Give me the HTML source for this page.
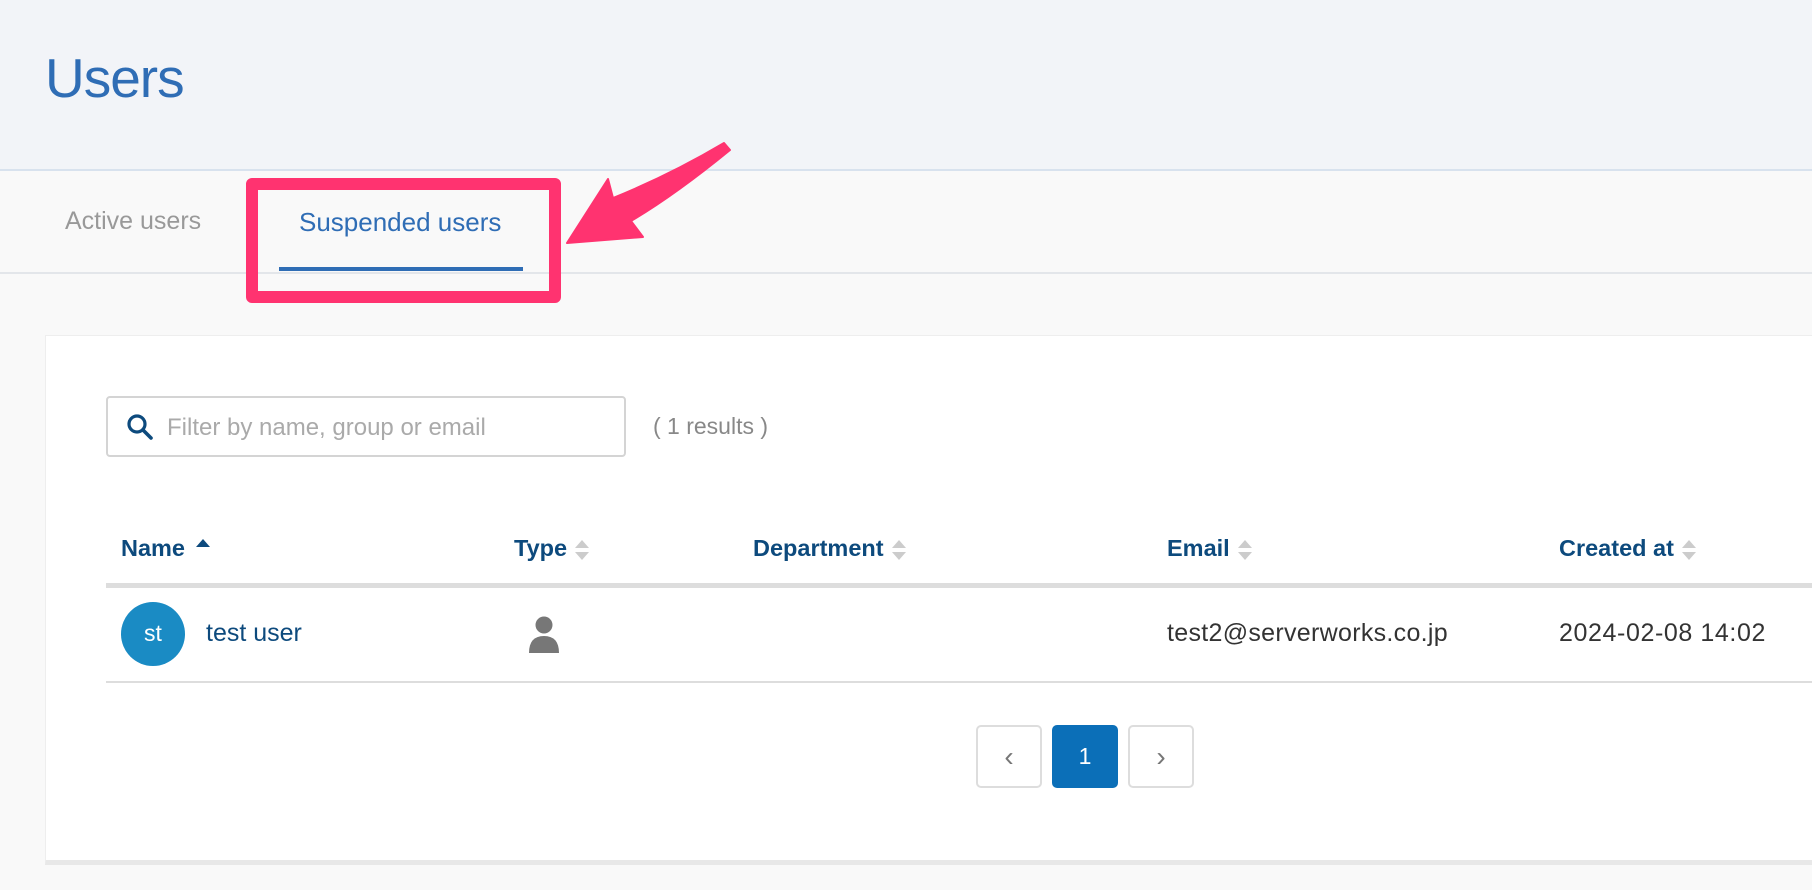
<!DOCTYPE html>
<html><head><meta charset="utf-8"><style>
*{margin:0;padding:0;box-sizing:border-box}
body{width:1812px;height:890px;overflow:hidden;background:#f9f9f9;font-family:"Liberation Sans",sans-serif;position:relative}
.hdr{position:absolute;left:0;top:0;width:1812px;height:171px;background:#f2f4f8;border-bottom:2px solid #d8e2ee}
.hdr h1{position:absolute;left:45px;top:46px;font-weight:normal;font-size:55px;color:#2f6db5;letter-spacing:-1px}
.tabs{position:absolute;left:0;top:171px;width:1812px;height:103px;background:#f9f9f9;border-bottom:2px solid #e3e6ea}
.t{position:absolute;top:36px;font-size:25px}
.ul{position:absolute;left:279px;top:96px;width:244px;height:4px;background:#2f6db5}
.box{position:absolute;left:246px;top:178px;width:315px;height:125px;border:12px solid #ff3370;border-radius:6px}
.card{position:absolute;left:45px;top:335px;width:1780px;height:530px;background:#fff;border:1px solid #eee;border-bottom:5px solid #e8e8e8}
.search{position:absolute;left:106px;top:396px;width:520px;height:61px;border:2px solid #d4d4d4;border-radius:4px;background:#fff}
.search span{position:absolute;left:59px;top:16px;font-size:24px;color:#aaa}
.th{position:absolute;top:535px;font-size:23.5px;font-weight:bold;color:#0d4a7d}
.sort{display:inline-block;vertical-align:middle;margin-left:8px;width:14px;height:22px;position:relative}
.sort:before{content:"";position:absolute;left:0;top:1px;border:7px solid transparent;border-bottom:8px solid #ccc;border-top:0}
.sort:after{content:"";position:absolute;left:0;top:13px;border:7px solid transparent;border-top:8px solid #ccc;border-bottom:0}
.td{position:absolute;top:619px;font-size:25px;color:#333}
.pg{position:absolute;top:725px;width:66px;height:63px;border:2px solid #ddd;border-radius:5px;background:#fff;text-align:center;line-height:59px;font-size:28px;color:#777}
</style></head><body>
<div class="hdr"><h1>Users</h1></div>
<div class="tabs">
<div class="t" style="left:65px;color:#999">Active users</div>
<div class="t" style="left:299px;color:#2f6db5;font-size:26px">Suspended users</div>
<div class="ul"></div>
</div>
<div class="box"></div>
<svg style="position:absolute;left:0;top:0" width="800" height="320"><path d="M567,243 L608,179 L613,198 Q670,175 724,143 L730,150 Q675,195 631,221 L643,237 Z" fill="#ff3370" stroke="#ff3370" stroke-width="2" stroke-linejoin="round"/></svg>
<div class="card"></div>
<div class="search"><svg style="position:absolute;left:18px;top:15px" width="28" height="28" viewBox="0 0 28 28"><circle cx="11" cy="11" r="8" fill="none" stroke="#0d4a7d" stroke-width="3.2"/><line x1="17" y1="17" x2="25" y2="25" stroke="#0d4a7d" stroke-width="3.6" stroke-linecap="round"/></svg><span>Filter by name, group or email</span></div>
<div style="position:absolute;left:653px;top:413px;font-size:23px;color:#888">( 1 results )</div>
<div class="th" style="left:121px">Name <span style="display:inline-block;vertical-align:top;margin-top:4px;margin-left:4px;border:7px solid transparent;border-bottom:8px solid #0d4a7d;border-top:0"></span></div>
<div class="th" style="left:514px">Type<span class="sort"></span></div>
<div class="th" style="left:753px">Department<span class="sort"></span></div>
<div class="th" style="left:1167px">Email<span class="sort"></span></div>
<div class="th" style="left:1559px">Created at<span class="sort"></span></div>
<div style="position:absolute;left:106px;top:583px;width:1706px;height:5px;background:#ddd"></div>
<div style="position:absolute;left:121px;top:602px;width:64px;height:64px;border-radius:50%;background:#1a8bc4;color:#fff;font-size:23px;text-align:center;line-height:62px">st</div>
<div class="td" style="left:206px;color:#0d4a7d">test user</div>
<svg style="position:absolute;left:527px;top:615px" width="34" height="38" viewBox="0 0 34 38"><circle cx="17" cy="10" r="8.5" fill="#777"/><path d="M2 38 Q2 21 17 21 Q32 21 32 38 Z" fill="#777"/></svg>
<div class="td" style="left:1167px;letter-spacing:0.3px">test2@serverworks.co.jp</div>
<div class="td" style="left:1559px;letter-spacing:0.6px">2024-02-08 14:02</div>
<div style="position:absolute;left:106px;top:681px;width:1706px;height:2px;background:#ddd"></div>
<div class="pg" style="left:976px">&#x2039;</div>
<div class="pg" style="left:1052px;background:#0b6fb8;border-color:#0b6fb8;color:#fff;font-size:23px">1</div>
<div class="pg" style="left:1128px">&#x203A;</div>
</body></html>
